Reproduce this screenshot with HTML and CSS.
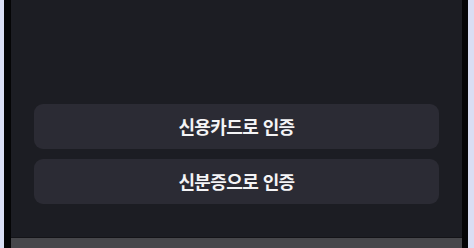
FILE: index.html
```html
<!DOCTYPE html>
<html lang="ko">
<head>
<meta charset="utf-8">
<link rel="stylesheet" href="styles.css">
</head>
<body>
<div class="frame">
  <div class="edge edge-left"></div>
  <div class="bezel bezel-left"></div>
  <main class="panel">
    <div class="actions">
      <button class="action">신용카드로 인증</button>
      <button class="action">신분증으로 인증</button>
    </div>
    <div class="bottom-bar"></div>
  </main>
  <div class="bezel bezel-right"></div>
  <div class="edge edge-right"></div>
</div>
</body>
</html>
```
FILE: styles.css
```css
* { box-sizing: border-box; }
html, body { margin: 0; padding: 0; }
body {
  width: 474px;
  height: 248px;
  overflow: hidden;
  background: #1c1d23;
  font-family: "Noto Sans CJK KR", "Noto Sans", sans-serif;
}
.frame {
  display: flex;
  height: 248px;
}
.edge { flex: none; background: #d9def3; }
.edge-left { width: 4px; }
.edge-right { width: 6px; }
.bezel { flex: none; background: #050506; }
.bezel-left { width: 7px; }
.bezel-right { width: 6px; }
.panel {
  flex: 1;
  display: flex;
  flex-direction: column;
  justify-content: flex-end;
  background: #1c1d23;
}
.actions {
  display: flex;
  flex-direction: column;
  gap: 10px;
  padding: 0 23px;
  margin-bottom: 33px;
}
.action {
  height: 45px;
  border: none;
  border-radius: 9px;
  background: #2b2b34;
  color: #f4f4f6;
  font-family: inherit;
  font-size: 18px;
  font-weight: 700;
  letter-spacing: -0.6px;
  display: flex;
  align-items: center;
  justify-content: center;
  padding: 0 0 1px;
}
.bottom-bar {
  height: 11px;
  background: #47474b;
  border-top: 1px solid #141418;
}
```
